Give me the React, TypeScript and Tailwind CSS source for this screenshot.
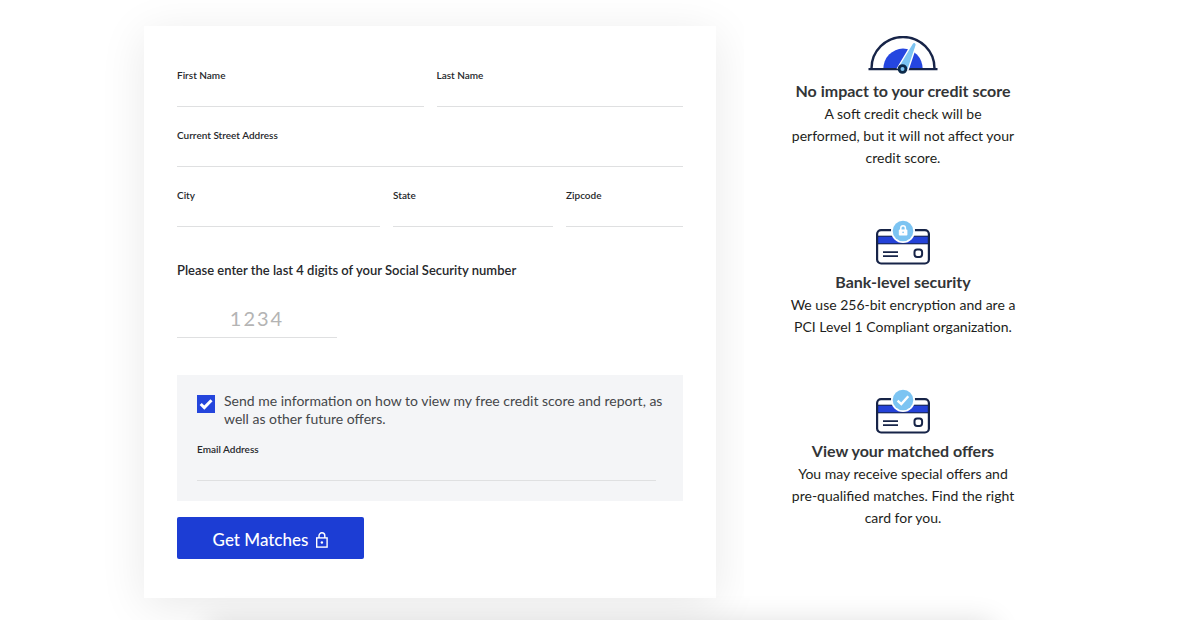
import type { ReactNode } from "react";

function Field({ id, label }: { id: string; label: string }) {
  return (
    <div className="flex min-w-0 flex-col">
      <label htmlFor={id} className="text-[10px] leading-[14px] font-semibold">
        {label}
      </label>
      <input
        id={id}
        type="text"
        className="h-[25px] w-full border-b border-[#dfe0e1] bg-transparent text-sm outline-none focus:border-[#1d3fd6]"
      />
    </div>
  );
}

function GaugeIcon() {
  return (
    <svg width="70" height="38" viewBox="0 0 70 38" fill="none" aria-hidden="true">
      <path d="M15.3 33a19.7 20.4 0 0 1 39.4 0z" fill="#2546e0" />
      <path d="M3.5 33V32.4a31.5 31.4 0 0 1 63 0v.6" stroke="#172448" strokeWidth="2.4" />
      <path d="M0.5 33.2h69" stroke="#172448" strokeWidth="2.2" />
      <path d="M29.6 32 44 7.8q1.5-2.2 3.3-1.1 1.6 1 .8 3L40 34z" fill="#7cc4f2" stroke="#fff" strokeWidth="1.4" />
      <circle cx="34.5" cy="33" r="3.4" fill="#7cc4f2" stroke="#0c2a4a" strokeWidth="2.8" />
    </svg>
  );
}

function CardIcon({ children }: { children: ReactNode }) {
  return (
    <svg width="54" height="45" viewBox="0 0 54 45" fill="none" aria-hidden="true">
      <path d="M2 16h50v8H2z" fill="#2442d8" />
      <rect x="1.1" y="10.1" width="51.8" height="33.4" rx="4" stroke="#172448" strokeWidth="2.2" />
      <path d="M1 16.2h52M1 23.8h52" stroke="#172448" strokeWidth="1" />
      <path d="M7 32.2h15M7 36.2h15" stroke="#172448" strokeWidth="1.8" />
      <rect x="38.5" y="29.5" width="7.6" height="7.4" rx="2.6" stroke="#172448" strokeWidth="2" />
      <circle cx="27" cy="11" r="12" fill="#fff" />
      <circle cx="27" cy="11" r="10.3" fill="#7cc4f2" />
      {children}
    </svg>
  );
}

function Benefit({ icon, title, children }: { icon: ReactNode; title: string; children: ReactNode }) {
  return (
    <section className="flex flex-col items-center text-center">
      {icon}
      <h2 className="mt-[5px] text-base leading-6 font-bold text-[#333537]">{title}</h2>
      <p className="max-w-[226px] text-sm leading-[22px] text-[#1d1e20]">{children}</p>
    </section>
  );
}

export default function App() {
  return (
    <div className="h-screen overflow-hidden bg-white font-['Lato','Liberation_Sans',sans-serif] text-[#26282b]">
      <main className="mx-auto flex max-w-[960px] items-stretch gap-7 pt-[26px] pr-5 pl-6">
        <form
          className="min-w-0 flex-1 bg-white px-[33px] pt-[42px] pb-[39px] shadow-[0_8px_44px_rgba(0,0,0,0.09)]"
          onSubmit={(e) => e.preventDefault()}
        >
          <div className="flex flex-col gap-[21px]">
            <div className="grid grid-cols-2 gap-[13px]">
              <Field id="first" label="First Name" />
              <Field id="last" label="Last Name" />
            </div>
            <Field id="street" label="Current Street Address" />
            <div className="grid grid-cols-[203fr_160fr_117fr] gap-[13px]">
              <Field id="city" label="City" />
              <Field id="state" label="State" />
              <Field id="zip" label="Zipcode" />
            </div>
          </div>

          <label htmlFor="ssn" className="mt-[33px] block text-[13px] leading-5 font-semibold">
            Please enter the last 4 digits of your Social Security number
          </label>
          <input
            id="ssn"
            type="text"
            inputMode="numeric"
            maxLength={4}
            placeholder="1234"
            className="mt-5 block h-[38px] w-40 border-b border-[#dfe0e1] pb-0.5 text-center text-xl tracking-widest outline-none placeholder:text-[#b4b4b4]"
          />

          <div className="mt-[37px] bg-[#f4f5f7] py-5 pr-4 pl-5">
            <div className="-mt-[3px] flex gap-[9px]">
              <span className="relative mt-[3px] h-[18px] w-[18px] shrink-0">
                <input
                  id="offers"
                  type="checkbox"
                  defaultChecked
                  className="peer block h-full w-full appearance-none border border-[#2445dc] checked:bg-[#2445dc]"
                />
                <svg
                  viewBox="0 0 18 18"
                  className="pointer-events-none absolute inset-0 hidden peer-checked:block"
                  fill="none"
                  stroke="#fff"
                  strokeWidth="3"
                  aria-hidden="true"
                >
                  <path d="m3.7 9 3.6 3.6 7.2-7.4" />
                </svg>
              </span>
              <label htmlFor="offers" className="text-sm leading-[18px] text-[#45474a]">
                Send me information on how to view my free credit score and report, as well as other future offers.
              </label>
            </div>
            <div className="mt-[14px] mr-[11px]">
              <Field id="email" label="Email Address" />
            </div>
          </div>

          <button
            type="submit"
            className="mt-4 flex h-[42px] w-[187px] items-center justify-center gap-2 rounded-xs bg-[#1c3dd4] pt-1 text-[17px] font-medium text-white"
          >
            Get Matches
            <svg width="12" height="16" viewBox="0 0 12 16" fill="none" stroke="#fff" strokeWidth="1.4" aria-hidden="true">
              <rect x="0.7" y="5.9" width="10.4" height="9.2" />
              <path d="M3 5.9V3.7a2.9 2.9 0 0 1 5.8 0v2.2" />
              <circle cx="5.9" cy="10.5" r="1.2" fill="#fff" stroke="none" />
            </svg>
          </button>
        </form>

        <aside className="relative -mt-[26px] flex w-[316px] shrink-0 flex-col gap-[51px] bg-white pt-9 pl-0.5">
          <Benefit icon={<GaugeIcon />} title="No impact to your credit score">
            A soft credit check will be performed, but it will not affect your credit score.
          </Benefit>
          <Benefit
            icon={
              <CardIcon>
                <rect x="22.8" y="9.6" width="8.6" height="6" rx="0.8" fill="#fff" />
                <path d="M24.8 10V8a2.3 2.3 0 0 1 4.6 0v2" stroke="#fff" strokeWidth="1.5" />
                <circle cx="27.1" cy="12.4" r="0.8" fill="#7cc4f2" />
              </CardIcon>
            }
            title="Bank-level security"
          >
            We use 256-bit encryption and are a PCI Level 1 Compliant organization.
          </Benefit>
          <Benefit
            icon={
              <CardIcon>
                <path d="m21.6 11.6 3.7 3.5 7-7.8" stroke="#fff" strokeWidth="2.4" />
              </CardIcon>
            }
            title="View your matched offers"
          >
            You may receive special offers and pre-qualified matches. Find the right card for you.
          </Benefit>
        </aside>
      </main>
      <div className="relative mx-auto mt-[26px] h-20 max-w-[784px] bg-white shadow-[0_0_30px_rgba(0,0,0,0.16)]" />
    </div>
  );
}
